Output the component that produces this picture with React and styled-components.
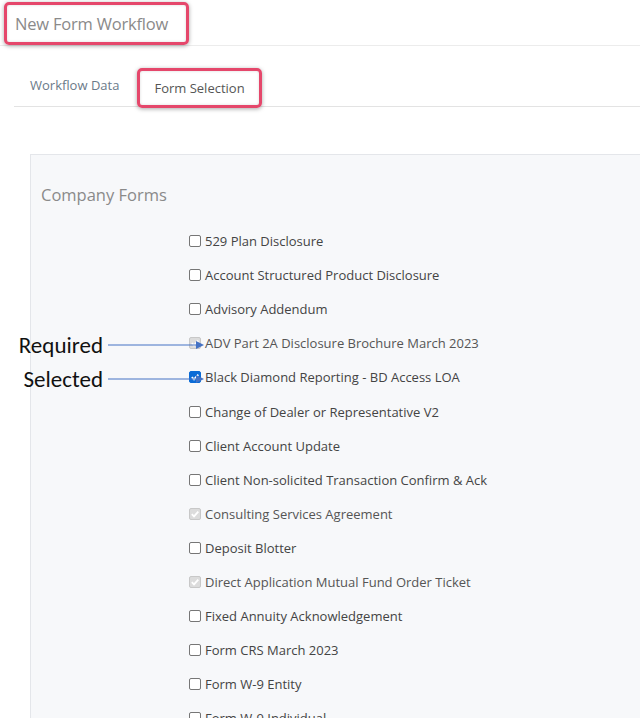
import React from "react";
import styled, { createGlobalStyle } from "styled-components";

const G = createGlobalStyle`
  body { margin:0; background:#fff; font-family:"Open Sans","Noto Sans",sans-serif; overflow:hidden; }
`;
const Page = styled.div`position:relative; width:640px; height:718px; overflow:hidden;`;
const Header = styled.div`height:46px; padding:2px 0 0 4px; box-sizing:border-box; border-bottom:1px solid #ececec; margin-left:0;`;
const highlight = `border:3px solid #e5476b; border-radius:5px; box-shadow:0 1px 4px rgba(0,0,0,.35), inset 0 0 3px rgba(0,0,0,.15);`;
const TitleBox = styled.div`${highlight} width:171px; height:37px; box-sizing:content-box; padding-left:8px; display:flex; align-items:center; font-size:16.5px; color:#8a8a8a; letter-spacing:-0.2px;`;
const Tabs = styled.div`display:flex; margin-left:14px; height:60px; border-bottom:1.5px solid #e3e3e3; align-items:flex-end;`;
const Tab = styled.div`
  font-size:13px; color:${p=>p.$active?"#555":"#6b7a89"};
  ${p=>p.$active
    ? `${highlight} height:40px; box-sizing:border-box; padding:0 14px; display:flex; align-items:center; margin:0 0 -2px 2px;`
    : `padding:0 16px 12px;`}
`;
const Panel = styled.div`margin:47px 0 0 30px; background:#f7f8fa; border:1px solid #e4e6ea; border-right:none; height:700px; padding:28px 0 0 10px;`;
const Heading = styled.div`font-size:16.5px; color:#8a8a8a;`;
const List = styled.div`margin:18px 0 0 148px; display:flex; flex-direction:column;`;
const Row = styled.label`display:flex; align-items:center; height:34.1px; font-size:13px; color:${p=>p.$dim?"#555":"#444"};`;
const Box = styled.span`
  width:12px; height:12px; box-sizing:border-box; border-radius:2px; margin-right:4px; flex:none;
  border:1px solid ${p=>p.$req?"#c8c8c8":p.$sel?"#0b6bd6":"#767676"};
  background:${p=>p.$req?"#dcdcdc":p.$sel?"#0b6bd6":"#fff"};
  display:flex; align-items:center; justify-content:center;
`;
const Notes = styled.div`position:absolute; left:0; top:328px; display:flex; flex-direction:column;`;
const NoteRow = styled.div`display:flex; align-items:center; height:34px;`;
const Note = styled.div`width:103px; text-align:right; font-family:Carlito,"Liberation Sans",sans-serif; font-size:23px; color:#111;`;
const Arrow = styled.svg`margin-left:4px;`;

const items = [
  ["529 Plan Disclosure"],["Account Structured Product Disclosure"],["Advisory Addendum"],
  ["ADV Part 2A Disclosure Brochure March 2023","r"],["Black Diamond Reporting - BD Access LOA","s"],
  ["Change of Dealer or Representative V2"],["Client Account Update"],["Client Non-solicited Transaction Confirm & Ack"],
  ["Consulting Services Agreement","r"],["Deposit Blotter"],["Direct Application Mutual Fund Order Ticket","r"],
  ["Fixed Annuity Acknowledgement"],["Form CRS March 2023"],["Form W-9 Entity"],["Form W-9 Individual"],
];

const Check = ({c}) => <svg width="10" height="10" viewBox="0 0 10 10"><path d="M1.8 5.2 L4 7.4 L8.3 2.6" fill="none" stroke={c} strokeWidth="1.8"/></svg>;
const Arr = () => <Arrow width="98" height="12"><line x1="1" y1="6" x2="90" y2="6" stroke="#4472c4" strokeWidth="1"/><path d="M89 2 L97 6 L89 10Z" fill="#4472c4"/></Arrow>;

export default function App(){
  return <Page><G/>
    <Header><TitleBox>New Form Workflow</TitleBox></Header>
    <Tabs>
      <Tab>Workflow Data</Tab>
      <Tab $active>Form Selection</Tab>
    </Tabs>
    <Panel>
      <Heading>Company Forms</Heading>
      <List>
        {items.map(([t,k])=><Row key={t} $dim={k==="r"}>
          <Box $req={k==="r"} $sel={k==="s"}>{k?<Check c="#fff"/>:null}</Box>{t}
        </Row>)}
      </List>
    </Panel>
    <Notes>
      <NoteRow><Note>Required</Note><Arr/></NoteRow>
      <NoteRow><Note>Selected</Note><Arr/></NoteRow>
    </Notes>
  </Page>;
}
